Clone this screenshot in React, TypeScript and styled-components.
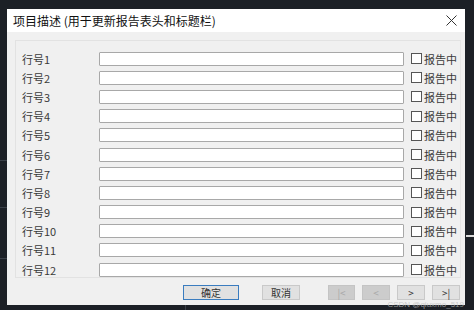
import React from "react";
import styled, { createGlobalStyle } from "styled-components";

const GlobalStyle = createGlobalStyle`
  html, body {
    margin: 0;
    padding: 0;
    background: #1c2026;
  }
  #root {
    width: 474px;
    height: 310px;
    overflow: hidden;
  }
`;

const Backdrop = styled.div`
  position: relative;
  width: 474px;
  height: 310px;
  padding: 9px 0 0 7px;
  box-sizing: border-box;
  background-color: #1c2026;
  background-image:
    linear-gradient(#3a4048, #3a4048),
    linear-gradient(#3a4048, #3a4048),
    linear-gradient(#3a4048, #3a4048),
    linear-gradient(#3a4048, #3a4048),
    linear-gradient(#d8d8d8, #d8d8d8);
  background-size: 7px 1px, 7px 1px, 7px 1px, 1px 10px, 8px 2px;
  background-position: 0 160px, 0 207px, 0 258px, 185px 300px, 466px 235px;
  background-repeat: no-repeat;
  font-family: "Noto Sans CJK SC", "Noto Sans", sans-serif;
`;

const Dialog = styled.div`
  width: 458px;
  height: 296px;
  background: #f0f0f0;
  display: flex;
  flex-direction: column;
`;

const TitleBar = styled.div`
  height: 23px;
  background: #ffffff;
  display: flex;
  align-items: center;
  justify-content: space-between;
  padding: 0 8px 0 6px;
  font-size: 12px;
  color: #111;
`;

const CloseIcon = styled.svg`
  width: 11px;
  height: 11px;
`;

const Body = styled.div`
  flex: 1;
  display: flex;
  flex-direction: column;
  padding: 8px 4px 0 8px;
`;

const Panel = styled.div`
  height: 238px;
  box-sizing: border-box;
  border: 1px solid #e2e2e2;
  border-right-color: #e6e6e6;
  background: #f0f0f0;
  padding: 8px 0 0 6px;
  overflow: hidden;
  display: flex;
  flex-direction: column;
`;

const Row = styled.div`
  height: 19.2px;
  flex: none;
  display: flex;
  align-items: center;
`;

const Label = styled.span`
  width: 77px;
  font-size: 11px;
  color: #3a3a3a;
  font-family: "Noto Sans CJK SC", sans-serif;
`;

const TextBox = styled.div`
  width: 305px;
  height: 14px;
  box-sizing: border-box;
  background: #fff;
  border: 1.5px solid #a8a8a8;
  border-radius: 1px;
`;

const Check = styled.span`
  margin-left: 7px;
  width: 11px;
  height: 11px;
  box-sizing: border-box;
  border: 1px solid #555;
  background: #fff;
`;

const CheckText = styled.span`
  margin-left: 2px;
  font-size: 11px;
  color: #3a3a3a;
`;

const ButtonRow = styled.div`
  display: flex;
  align-items: center;
  margin-top: 7px;
  padding-left: 168px;
`;

const Btn = styled.div<{ $w: number; $primary?: boolean; $disabled?: boolean; $gap?: number }>`
  width: ${p => p.$w}px;
  height: 15px;
  margin-left: ${p => p.$gap ?? 0}px;
  box-sizing: border-box;
  display: flex;
  align-items: center;
  justify-content: center;
  font-size: 10px;
  color: ${p => (p.$disabled ? "#a8a8a8" : "#333")};
  background: ${p => (p.$disabled ? "#cccccc" : "#e1e1e1")};
  border: 1px solid ${p => (p.$primary ? "#3a7cbf" : p.$disabled ? "#c4c4c4" : "#c9c9c9")};
`;

const Watermark = styled.span`
  position: absolute;
  right: 10px;
  bottom: 1px;
  font-size: 8px;
  color: rgba(190, 190, 190, 0.75);
  font-family: "Liberation Sans", sans-serif;
`;

const rows = Array.from({ length: 12 }, (_, i) => i + 1);

export default function App() {
  return (
    <>
      <GlobalStyle />
      <Backdrop>
        <Dialog>
          <TitleBar>
            <span>项目描述 (用于更新报告表头和标题栏)</span>
            <CloseIcon viewBox="0 0 11 11">
              <path d="M0.5 0.5 L10.5 10.5 M10.5 0.5 L0.5 10.5" stroke="#333" strokeWidth="1" />
            </CloseIcon>
          </TitleBar>
          <Body>
            <Panel>
              {rows.map(n => (
                <Row key={n}>
                  <Label>行号{n}</Label>
                  <TextBox />
                  <Check />
                  <CheckText>报告中</CheckText>
                </Row>
              ))}
            </Panel>
            <ButtonRow>
              <Btn $w={56} $primary>确定</Btn>
              <Btn $w={38} $gap={23}>取消</Btn>
              <Btn $w={27} $gap={28} $disabled>|&lt;</Btn>
              <Btn $w={28} $gap={7} $disabled>&lt;</Btn>
              <Btn $w={28} $gap={7}>&gt;</Btn>
              <Btn $w={28} $gap={7}>&gt;|</Btn>
            </ButtonRow>
          </Body>
        </Dialog>
        <Watermark>CSDN @qiuxmo_519</Watermark>
      </Backdrop>
    </>
  );
}
